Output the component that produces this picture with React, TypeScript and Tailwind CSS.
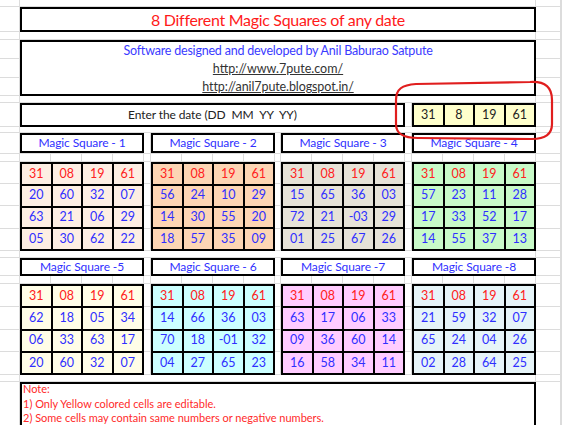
import React from "react";

const ROWS = 24;
const COLS = 22;

type Sq = { data: string[][]; bg: string; pos: string };

const squares: Sq[] = [
  { data: [["31","08","19","61"],["20","60","32","07"],["63","21","06","29"],["05","30","62","22"]], bg: "bg-[#fdeee3]", pos: "col-start-2 col-end-6 row-start-12 row-end-16" },
  { data: [["31","08","19","61"],["56","24","10","29"],["14","30","55","20"],["18","57","35","09"]], bg: "bg-[#fcd5b4]", pos: "col-start-7 col-end-11 row-start-12 row-end-16" },
  { data: [["31","08","19","61"],["15","65","36","03"],["72","21","-03","29"],["01","25","67","26"]], bg: "bg-[#e6e2d7]", pos: "col-start-12 col-end-16 row-start-12 row-end-16" },
  { data: [["31","08","19","61"],["57","23","11","28"],["17","33","52","17"],["14","55","37","13"]], bg: "bg-[#c8fac8]", pos: "col-start-17 col-end-21 row-start-12 row-end-16" },
  { data: [["31","08","19","61"],["62","18","05","34"],["06","33","63","17"],["20","60","32","07"]], bg: "bg-[#fffde7]", pos: "col-start-2 col-end-6 row-start-19 row-end-23" },
  { data: [["31","08","19","61"],["14","66","36","03"],["70","18","-01","32"],["04","27","65","23"]], bg: "bg-[#ccffff]", pos: "col-start-7 col-end-11 row-start-19 row-end-23" },
  { data: [["31","08","19","61"],["63","17","06","33"],["09","36","60","14"],["16","58","34","11"]], bg: "bg-[#ffccff]", pos: "col-start-12 col-end-16 row-start-19 row-end-23" },
  { data: [["31","08","19","61"],["21","59","32","07"],["65","24","04","26"],["02","28","64","25"]], bg: "bg-[#e6f4f8]", pos: "col-start-17 col-end-21 row-start-19 row-end-23" },
];

const headers: { label: string; pos: string }[] = [
  { label: "Magic Square - 1", pos: "col-start-2 col-end-6 row-start-10 h-[20px] self-start" },
  { label: "Magic Square - 2", pos: "col-start-7 col-end-11 row-start-10 h-[20px] self-start" },
  { label: "Magic Square - 3", pos: "col-start-12 col-end-16 row-start-10 h-[20px] self-start" },
  { label: "Magic Square - 4", pos: "col-start-17 col-end-21 row-start-10 h-[20px] self-start" },
  { label: "Magic Square -5", pos: "col-start-2 col-end-6 row-start-17" },
  { label: "Magic Square - 6", pos: "col-start-7 col-end-11 row-start-17" },
  { label: "Magic Square -7", pos: "col-start-12 col-end-16 row-start-17" },
  { label: "Magic Square -8", pos: "col-start-17 col-end-21 row-start-17" },
];

function Square({ sq }: { sq: Sq }) {
  return (
    <div className={`${sq.pos} grid grid-cols-4 grid-rows-4 gap-[2px] bg-black border-2 border-black`}>
      {sq.data.flat().map((v, i) => (
        <div
          key={i}
          className={`${sq.bg} flex items-center justify-center text-[12.5px] ${i < 4 ? "text-[#ff2020]" : "text-[#2f2fff]"}`}
        >
          {v}
        </div>
      ))}
    </div>
  );
}

// rows whose cells inside the block area are merged (no vertical gridlines)
const noVertRows = new Set([1, 3, 7, 9, 16, 23]);

export default function App() {
  const cells: React.ReactNode[] = [];
  for (let r = 1; r <= ROWS; r++) {
    for (let c = 1; c <= COLS; c++) {
      const noVert = noVertRows.has(r) && c >= 2 && c <= 19;
      cells.push(
        <div
          key={`${r}-${c}`}
          style={{ gridRow: r, gridColumn: c }}
          className={noVert ? "border-b border-[#dcdcdc]" : "border-r border-b border-[#dcdcdc]"}
        />
      );
    }
  }
  return (
    <div className="relative w-[562px] h-[425px] overflow-hidden bg-white font-['Lato',sans-serif]">
      <div className="grid grid-cols-[20px_repeat(4,31px)_7px_repeat(4,31px)_6px_repeat(4,31px)_7px_repeat(4,31px)_25px_1fr] grid-rows-[7px_25px_8px_19px_19px_18px_7px_24px_6px_21px_8px_22px_22px_23px_22px_7px_18px_8px_23px_23px_22px_23px_7px_60px]">
        {cells}

        <div className="col-start-2 col-end-21 row-start-2 border-2 border-black bg-white flex items-center justify-center text-[16px] tracking-[-0.3px] text-[#ff1a1a]">
          8 Different Magic Squares of any date
        </div>

        <div className="col-start-2 col-end-21 row-start-4 row-end-7 border-2 border-black bg-white flex flex-col items-center leading-[18px]">
          <div className="text-[12.5px] tracking-[-0.2px] text-[#3a3aff]">Software designed and developed by Anil Baburao Satpute</div>
          <div className="text-[12.5px] text-[#333] underline">http://www.7pute.com/</div>
          <div className="text-[12.5px] tracking-[-0.1px] text-[#333] underline">http://anil7pute.blogspot.in/</div>
        </div>

        <div className="col-start-2 col-end-16 row-start-8 border-2 border-black bg-white flex items-center justify-center text-[12px] tracking-[-0.1px] text-[#222]">
          Enter the date (DD&nbsp; MM&nbsp; YY&nbsp; YY)
        </div>

        <div className="col-start-17 col-end-21 row-start-8 grid grid-cols-4 gap-[2px] bg-black border-2 border-black">
          {["31", "8", "19", "61"].map((v) => (
            <div key={v} className="bg-[#ffffcc] flex items-center justify-center text-[12.5px] text-[#222]">
              {v}
            </div>
          ))}
        </div>

        {headers.map((h) => (
          <div
            key={h.label}
            className={`${h.pos} border-2 border-black bg-white flex items-center justify-center text-[12px] tracking-[-0.1px] text-[#3030ff]`}
          >
            {h.label}
          </div>
        ))}

        {squares.map((s, i) => (
          <Square key={i} sq={s} />
        ))}

        <div className="col-start-2 col-end-21 row-start-24 border-2 border-b-0 border-black bg-white px-[1px] text-[11px] leading-[14.5px] text-[#ff2a2a] overflow-hidden">
          <div className="-mt-[2px]">
            <div>Note:</div>
            <div>1) Only Yellow colored cells are editable.</div>
            <div>2) Some cells may contain same numbers or negative numbers.</div>
          </div>
        </div>
      </div>

      <svg className="absolute left-0 top-0 pointer-events-none" width="562" height="425" viewBox="0 0 562 425">
        <path
          d="M 396 100 C 396 89, 402 85, 416 84 L 530 82 C 546 81, 552 88, 552 100 L 552 124 C 552 134, 546 139, 532 139 L 418 138 C 403 138, 396 134, 396 124 Z"
          fill="none"
          stroke="#e01e1e"
          strokeWidth="2.2"
        />
      </svg>
    </div>
  );
}
